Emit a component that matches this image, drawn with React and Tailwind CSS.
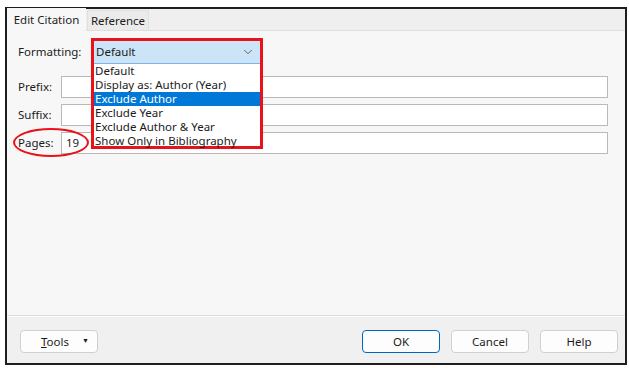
import { ChevronDown } from 'lucide-react';

const options = [
  'Default',
  'Display as: Author (Year)',
  'Exclude Author',
  'Exclude Year',
  'Exclude Author & Year',
  'Show Only in Bibliography',
];

function Field({ label, value }) {
  return (
    <div className="flex items-center h-[22px]">
      <span className="w-[43px] shrink-0">{label}</span>
      <div className="flex-1 h-[22px] bg-white border border-[#b9b9b9] flex items-center pl-[4px]">
        {value}
      </div>
    </div>
  );
}

function Button({ children, primary }) {
  return (
    <button
      className={
        'w-[78px] h-[23px] rounded-[4px] bg-[#fdfdfd] flex items-center justify-center ' +
        (primary ? 'border border-[#0067c0]' : 'border border-[#d0d0d0]')
      }
    >
      {children}
    </button>
  );
}

export default function App() {
  return (
    <div
      className="w-[629px] h-[368px] bg-white pt-[7px] pl-[5px] text-[11.5px] text-[#1b1b1b]"
      style={{ fontFamily: '"Noto Sans", sans-serif' }}
    >
      <div className="w-[622px] h-[358px] border-2 border-[#1e1e1e] flex flex-col bg-[#f7f7f7]">
        {/* tab strip */}
        <div className="h-[22px] bg-[#efefef] border-b border-[#dedede] flex items-end shrink-0">
          <div className="h-[23px] w-[79px] bg-[#f7f7f7] flex items-center justify-center -mb-px">
            Edit Citation
          </div>
          <div className="h-[20px] w-[62px] ml-[1px] bg-[#ebebeb] border border-b-0 border-[#e0e0e0] flex items-center justify-center">
            Reference
          </div>
        </div>

        {/* panel */}
        <div className="flex-1 pl-[11px] pr-[17px] pt-[7px] relative">
          <div className="flex items-center h-[27px]">
            <span className="w-[73px] shrink-0">Formatting:</span>
            <div className="relative w-[172px] h-[27px]">
              <div className="absolute left-0 top-0 w-[172px] h-[111px] border-[3px] border-[#e8121b] bg-white flex flex-col z-10">
                <div className="h-[23px] bg-[#cce4f7] border-b border-[#7eb4ea] flex items-center justify-between pl-[2px] pr-[5px] shrink-0">
                  <span>Default</span>
                  <ChevronDown size={14} strokeWidth={1.4} className="text-[#444]" />
                </div>
                {options.map((o, i) => (
                  <div
                    key={o}
                    className={
                      'h-[14px] leading-[14px] pl-[1px] whitespace-nowrap ' +
                      (i === 2 ? 'bg-[#0078d7] text-white' : '')
                    }
                  >
                    {o}
                  </div>
                ))}
              </div>
            </div>
          </div>

          <div className="flex flex-col gap-[6px] mt-[11px]">
            <Field label="Prefix:" />
            <Field label="Suffix:" />
            <Field label="Pages:" value="19" />
          </div>

          <div className="absolute left-[6px] top-[97px] w-[76px] h-[29px] rounded-[50%] border-[2.5px] border-[#e8121b]" />
        </div>

        {/* footer */}
        <div className="h-[48px] shrink-0 bg-[#f0f0f0] border-t border-[#dcdcdc] shadow-[inset_0_1px_0_#ffffff] flex items-start pt-[14px] pl-[13px] pr-[7px]">
          <button className="w-[78px] h-[23px] rounded-[4px] bg-[#fdfdfd] border border-[#d0d0d0] flex items-center pl-[20px] pr-[8px] justify-between">
            <span>
              <span className="underline">T</span>ools
            </span>
            <span className="text-[7px]">▼</span>
          </button>
          <div className="flex-1" />
          <div className="flex gap-[11px]">
            <Button primary>OK</Button>
            <Button>Cancel</Button>
            <Button>Help</Button>
          </div>
        </div>
      </div>
    </div>
  );
}
